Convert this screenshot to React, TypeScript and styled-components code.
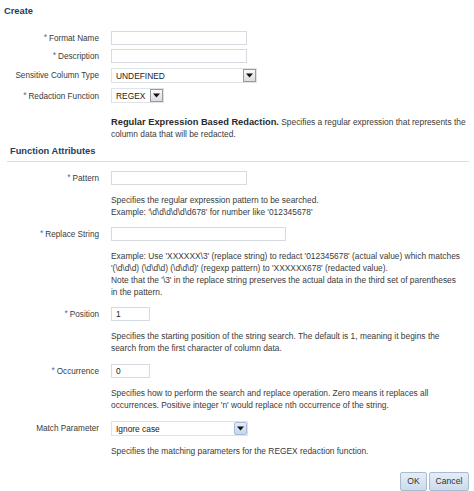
import React from "react";
import styled, { createGlobalStyle } from "styled-components";

const Global = createGlobalStyle`
  html, body { margin: 0; padding: 0; background: #ffffff; }
  body { font-family: "Liberation Sans", Arial, sans-serif; font-size: 8.4px; color: #3a3a3a; }
`;

const Page = styled.div`
  width: 474px;
  height: 491px;
  box-sizing: border-box;
  padding: 5px 5px 0 4px;
  display: flex;
  flex-direction: column;
`;

const Heading = styled.div<{ $top?: number; $left?: number }>`
  font-weight: bold;
  font-size: 9.3px;
  color: #223d60;
  line-height: 12px;
  margin-top: ${(p) => p.$top ?? 0}px;
  margin-left: ${(p) => p.$left ?? 0}px;
`;

const Divider = styled.div`
  height: 1px;
  background: #dcdcdc;
  margin: 4px 0 0 3px;
`;

const Row = styled.div<{ $top: number }>`
  display: grid;
  grid-template-columns: 95px auto;
  column-gap: 12px;
  align-items: center;
  margin-top: ${(p) => p.$top}px;
  height: 15px;
`;

const Label = styled.div`
  text-align: right;
  white-space: nowrap;
  color: #3a3a3a;
  font-size: 8.2px;
`;

const Star = styled.span`
  color: #3a68b0;
  font-size: 8.4px;
  margin-right: 2px;
  position: relative;
  top: -1px;
`;

const Field = styled.div`
  display: flex;
  align-items: center;
`;

const TextBox = styled.div<{ $w: number }>`
  width: ${(p) => p.$w}px;
  height: 14px;
  box-sizing: border-box;
  border: 1px solid #d6dbe2;
  background: #fff;
  padding-left: 4px;
  line-height: 12px;
  color: #222;
`;

const SelectBox = styled.div<{ $w: number }>`
  width: ${(p) => p.$w}px;
  height: 15px;
  box-sizing: border-box;
  border: 1px solid #dfe3e8;
  background: #fff;
  display: flex;
  align-items: center;
  justify-content: space-between;
  padding: 0 0 0 4px;
  color: #222;
`;

const DropBtn = styled.div<{ $blue?: boolean }>`
  width: 13px;
  height: 13px;
  box-sizing: border-box;
  border: 1px solid ${(p) => (p.$blue ? "#a7bcd8" : "#9a9a9a")};
  border-radius: ${(p) => (p.$blue ? "2px" : "0")};
  background: ${(p) =>
    p.$blue ? "linear-gradient(#e3ecf7, #c5d6ec)" : "linear-gradient(#fafafa, #dcdcdc)"};
  display: flex;
  align-items: center;
  justify-content: center;
`;

const Help = styled.div<{ $top: number; $lh?: number }>`
  margin-left: 107px;
  margin-top: ${(p) => p.$top}px;
  line-height: ${(p) => p.$lh ?? 11.5}px;
  color: #3a3a3a;
  white-space: nowrap;
`;

const Bold = styled.b`
  font-size: 9.3px;
  color: #2a2a2a;
`;

const Footer = styled.div`
  display: flex;
  justify-content: flex-end;
  gap: 2px;
  margin-top: 14px;
`;

const Button = styled.div<{ $w: number }>`
  width: ${(p) => p.$w}px;
  height: 19px;
  box-sizing: border-box;
  border: 1px solid #a9bbd0;
  border-radius: 2px;
  background: linear-gradient(#e6eef7, #cbdbec);
  display: flex;
  align-items: center;
  justify-content: center;
  color: #333;
  font-size: 8.6px;
`;

const Arrow = () => (
  <svg width="7" height="5" viewBox="0 0 7 5">
    <path d="M0 0.5 H7 L3.5 4.5 Z" fill="#111" />
  </svg>
);

type Req = { req?: boolean; children: React.ReactNode };
const L = ({ req, children }: Req) => (
  <Label>
    {req && <Star>*</Star>}
    {children}
  </Label>
);

export default function App() {
  return (
    <>
      <Global />
      <Page>
        <Heading $top={0}>Create</Heading>
        <Row $top={13}>
          <L req>Format Name</L>
          <Field><TextBox $w={136} /></Field>
        </Row>
        <Row $top={3}>
          <L req>Description</L>
          <Field><TextBox $w={136} /></Field>
        </Row>
        <Row $top={5}>
          <L>Sensitive Column Type</L>
          <Field>
            <SelectBox $w={146}>
              UNDEFINED
              <DropBtn><Arrow /></DropBtn>
            </SelectBox>
          </Field>
        </Row>
        <Row $top={5}>
          <L req>Redaction Function</L>
          <Field>
            <SelectBox $w={53}>
              REGEX
              <DropBtn><Arrow /></DropBtn>
            </SelectBox>
          </Field>
        </Row>
        <Help $top={14}>
          <Bold>Regular Expression Based Redaction.</Bold> Specifies a regular expression that represents the
          <br />
          column data that will be redacted.
        </Help>
        <Heading $top={5} $left={6}>Function Attributes</Heading>
        <Divider />
        <Row $top={8}>
          <L req>Pattern</L>
          <Field><TextBox $w={136} /></Field>
        </Row>
        <Help $top={10}>
          Specifies the regular expression pattern to be searched.
          <br />
          Example: '\d\d\d\d\d\d678' for number like '012345678'
        </Help>
        <Row $top={8}>
          <L req>Replace String</L>
          <Field><TextBox $w={175} /></Field>
        </Row>
        <Help $top={9} $lh={12}>
          Example: Use 'XXXXXX\3' (replace string) to redact '012345678' (actual value) which matches
          <br />
          '(\d\d\d) (\d\d\d) (\d\d\d)' (regexp pattern) to 'XXXXXX678' (redacted value).
          <br />
          Note that the '\3' in the replace string preserves the actual data in the third set of parentheses
          <br />
          in the pattern.
        </Help>
        <Row $top={8}>
          <L req>Position</L>
          <Field><TextBox $w={39}>1</TextBox></Field>
        </Row>
        <Help $top={10}>
          Specifies the starting position of the string search. The default is 1, meaning it begins the
          <br />
          search from the first character of column data.
        </Help>
        <Row $top={9}>
          <L req>Occurrence</L>
          <Field><TextBox $w={39}>0</TextBox></Field>
        </Row>
        <Help $top={10}>
          Specifies how to perform the search and replace operation. Zero means it replaces all
          <br />
          occurrences. Positive integer 'n' would replace nth occurrence of the string.
        </Help>
        <Row $top={10}>
          <L>Match Parameter</L>
          <Field>
            <SelectBox $w={137}>
              Ignore case
              <DropBtn $blue><Arrow /></DropBtn>
            </SelectBox>
          </Field>
        </Row>
        <Help $top={10}>Specifies the matching parameters for the REGEX redaction function.</Help>
        <Footer>
          <Button $w={27}>OK</Button>
          <Button $w={40}>Cancel</Button>
        </Footer>
      </Page>
    </>
  );
}
